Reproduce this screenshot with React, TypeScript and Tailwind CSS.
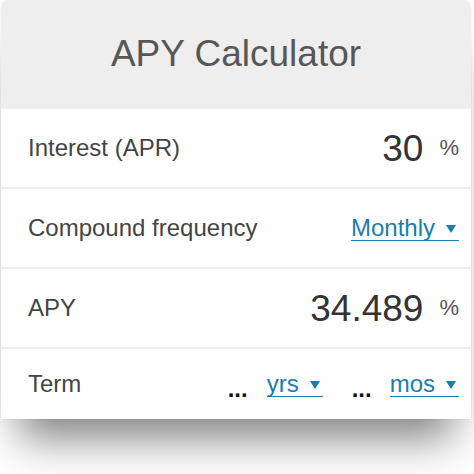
import React from 'react'

const font = { fontFamily: '"Liberation Sans", Arial, Helvetica, sans-serif' }

function Caret() {
  return (
    <svg width="10" height="8" viewBox="0 0 10 8" className="ml-[11px] mb-[7px]">
      <path d="M0 0 H10 L5 8 Z" fill="#1a7db0" />
    </svg>
  )
}

function Select({ label }: { label: string }) {
  return (
    <span className="inline-flex items-end leading-none border-b-[1.5px] border-[#1a7db0] text-[24px] text-[#1a7db0] pr-[3px]">
      <span>{label}</span>
      <Caret />
    </span>
  )
}

function Row({ label, children, last }: { label: string; children: React.ReactNode; last?: boolean }) {
  return (
    <div className={`flex items-center justify-between pl-[27px] pr-[12px] border-t-2 border-[#eeeeee] ${last ? 'h-[72px]' : 'h-[80px]'}`}>
      <span className="text-[24px] leading-none text-[#444]">{label}</span>
      <div className="flex items-center">{children}</div>
    </div>
  )
}

function Value({ n }: { n: string }) {
  return (
    <>
      <span className="text-[37px] leading-none text-[#333]">{n}</span>
      <span className="ml-[16px] text-[22px] leading-none text-[#555]">%</span>
    </>
  )
}

export default function App() {
  return (
    <div className="w-[474px] h-[474px] bg-white overflow-hidden" style={font}>
      <div className="ml-[1px] w-[470px] rounded-t-[8px] bg-white shadow-[0_0_2px_rgba(0,0,0,0.12),0_38px_40px_-18px_rgba(0,0,0,0.48)]">
        <div className="h-[107px] flex items-center justify-center rounded-t-[8px] bg-[#eeeeee]">
          <h1 className="text-[37px] leading-none text-[#575757]">APY Calculator</h1>
        </div>
        <Row label="Interest (APR)">
          <Value n="30" />
        </Row>
        <Row label="Compound frequency">
          <Select label="Monthly" />
        </Row>
        <Row label="APY">
          <Value n="34.489" />
        </Row>
        <Row label="Term" last>
          <div className="flex items-end">
            <span className="-mb-[4px] text-[24px] font-bold leading-none text-[#111] mr-[19px]">...</span>
            <Select label="yrs" />
            <span className="-mb-[4px] ml-[29px] text-[24px] font-bold leading-none text-[#111] mr-[18px]">...</span>
            <Select label="mos" />
          </div>
        </Row>
      </div>
    </div>
  )
}
